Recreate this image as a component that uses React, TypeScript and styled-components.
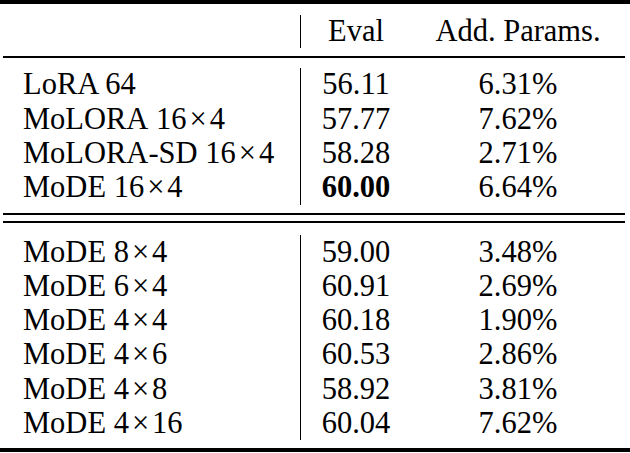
import React from "react";
import styled, { createGlobalStyle } from "styled-components";

const GlobalStyle = createGlobalStyle`
  html, body {
    margin: 0;
    padding: 0;
    background: #ffffff;
  }
`;

const Page = styled.div`
  width: 630px;
  height: 453px;
  overflow: hidden;
  display: flex;
  flex-direction: column;
  font-family: "Liberation Serif", "Times New Roman", serif;
  color: #000;
`;

const ThickRule = styled.div`
  height: 3.5px;
  background: #000;
  flex-shrink: 0;
`;

const MidRule = styled.div<{ $inset?: boolean }>`
  height: 2px;
  background: #000;
  margin: ${(p) => (p.$inset ? "0 5px 0 3px" : "0")};
  flex-shrink: 0;
`;

const DoubleRule = styled.div`
  display: flex;
  flex-direction: column;
  gap: 6.5px;
  margin: 0 5px 0 3px;
`;

const Block = styled.div<{ $top: number; $bottom: number }>`
  padding: ${(p) => p.$top}px 0 ${(p) => p.$bottom}px 3px;
`;

const Row = styled.div<{ $h: number }>`
  display: grid;
  grid-template-columns: 298px 110px 214px;
  height: ${(p) => p.$h}px;
  align-items: center;
  font-family: "Liberation Serif", "Times New Roman", serif;
  font-size: 30.5px;
  line-height: 1;
`;

const NameCell = styled.div`
  padding-left: 20px;
  height: 100%;
  display: flex;
  align-items: center;
  border-right: 1.5px solid #000;
  white-space: nowrap;
`;

const NumCell = styled.div<{ $bold?: boolean }>`
  text-align: center;
  font-weight: ${(p) => (p.$bold ? 700 : 400)};
  white-space: nowrap;
`;

const Times = styled.span`
  margin: 0 3px;
`;

type Entry = { name: string; size?: [number, number]; evalScore: string; params: string; bold?: boolean };

const top: Entry[] = [
  { name: "LoRA 64", evalScore: "56.11", params: "6.31%" },
  { name: "MoLORA", size: [16, 4], evalScore: "57.77", params: "7.62%" },
  { name: "MoLORA-SD", size: [16, 4], evalScore: "58.28", params: "2.71%" },
  { name: "MoDE", size: [16, 4], evalScore: "60.00", params: "6.64%", bold: true },
];

const bottom: Entry[] = [
  { name: "MoDE", size: [8, 4], evalScore: "59.00", params: "3.48%" },
  { name: "MoDE", size: [6, 4], evalScore: "60.91", params: "2.69%" },
  { name: "MoDE", size: [4, 4], evalScore: "60.18", params: "1.90%" },
  { name: "MoDE", size: [4, 6], evalScore: "60.53", params: "2.86%" },
  { name: "MoDE", size: [4, 8], evalScore: "58.92", params: "3.81%" },
  { name: "MoDE", size: [4, 16], evalScore: "60.04", params: "7.62%" },
];

const EntryRow: React.FC<{ e: Entry }> = ({ e }) => (
  <Row $h={34.3}>
    <NameCell>
      {e.name}
      {e.size && (
        <>
          &nbsp;{e.size[0]}
          <Times>×</Times>
          {e.size[1]}
        </>
      )}
    </NameCell>
    <NumCell $bold={e.bold}>{e.evalScore}</NumCell>
    <NumCell>{e.params}</NumCell>
  </Row>
);

export default function App() {
  return (
    <Page>
      <GlobalStyle />
      <ThickRule />
      <Block $top={11.5} $bottom={8}>
        <Row $h={33}>
          <NameCell />
          <NumCell>Eval</NumCell>
          <NumCell>Add. Params.</NumCell>
        </Row>
      </Block>
      <MidRule $inset />
      <Block $top={9.5} $bottom={8}>
        {top.map((e, i) => (
          <EntryRow key={i} e={e} />
        ))}
      </Block>
      <DoubleRule>
        <MidRule />
        <MidRule />
      </DoubleRule>
      <Block $top={11.5} $bottom={8}>
        {bottom.map((e, i) => (
          <EntryRow key={i} e={e} />
        ))}
      </Block>
      <ThickRule />
    </Page>
  );
}
